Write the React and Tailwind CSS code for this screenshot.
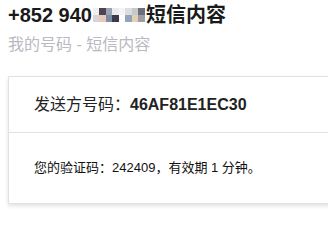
import React from "react";

const BLUR = [
  ["#f0eef0", "#4c4652", "#9aa3b4", "#eceaea", "#f4f4f4", "#dcdde0", "#c7c9cc", "#6a6f7d"],
  ["#d9d4d6", "#e6cbb8", "#7d8ca3", "#3c3a4a", "#ffffff", "#93a4bb", "#e3d0b6", "#9c9ea3"],
];

export default function App() {
  return (
    <div className="w-[328px] h-[227px] bg-white overflow-hidden" style={{ fontFamily: '"Liberation Sans", "Noto Sans CJK SC", sans-serif' }}>
      <div className="px-2 pt-[3px]">
        <div className="flex items-center text-[20px] font-bold leading-[24px] text-[#1a1a1a]">
          <span>+852 940</span>
          <span className="flex flex-col mx-[1px]">
            {BLUR.map((row, r) => (
              <span key={r} className="flex">
                {row.map((c, i) => (
                  <span key={i} className="block w-[6.5px] h-[7px]" style={{ background: c }} />
                ))}
              </span>
            ))}
          </span>
          <span>短信内容</span>
        </div>
        <div className="mt-[8px] text-[16px] leading-[20px] text-[#b9b9c0]">我的号码 - 短信内容</div>
      </div>
      <div className="ml-2 mt-[21px] w-[400px] border border-[#e2e2e2] bg-white shadow-[0_2px_4px_rgba(0,0,0,0.12)]">
        <div className="h-[56px] flex items-center pl-[25px] border-b border-[#e2e2e2] text-[16px] text-[#222]">
          <span>发送方号码：</span>
          <span className="font-bold">46AF81E1EC30</span>
        </div>
        <div className="h-[70px] flex items-center pl-[25px] text-[13px] text-[#111]">
          您的验证码：242409，有效期 1 分钟。
        </div>
      </div>
    </div>
  );
}
